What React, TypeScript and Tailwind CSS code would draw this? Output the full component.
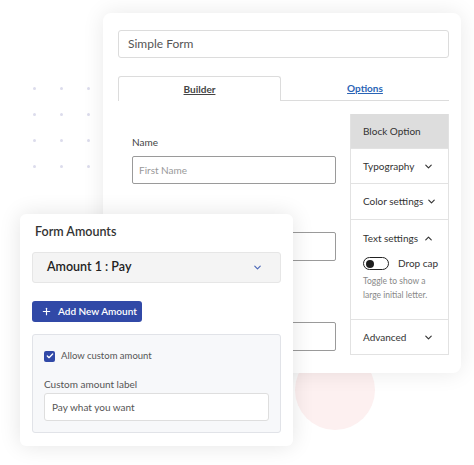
import { ChevronDown, ChevronUp, Plus, Check } from "lucide-react";

const font = { fontFamily: 'Lato, "Open Sans", sans-serif' };

function PanelRow({ label, up }: { label: string; up?: boolean }) {
  return (
    <div className="flex items-center justify-between border-t border-[#e2e2e2] h-[35px] pl-[12px] pr-[14px]">
      <span className="text-[10px] text-[#333] whitespace-nowrap">{label}</span>
      {up ? (
        <ChevronUp className="w-[11px] h-[11px] text-[#333]" strokeWidth={2.5} />
      ) : (
        <ChevronDown className="w-[11px] h-[11px] text-[#333]" strokeWidth={2.5} />
      )}
    </div>
  );
}

export default function App() {
  const dotRows = [88, 113, 139, 166];
  return (
    <div className="relative w-[474px] h-[465px] bg-white overflow-hidden" style={font}>
      {/* decorative dots */}
      <div className="absolute left-[33px] top-[87px] grid grid-cols-3 gap-x-[24px] gap-y-[23px]">
        {dotRows.flatMap((r) =>
          [0, 1, 2].map((c) => <span key={`${r}-${c}`} className="w-[3px] h-[3px] rounded-full bg-[#dcdcec]" />)
        )}
      </div>

      {/* pink blob */}
      <div className="absolute left-[295px] top-[350px] w-[80px] h-[80px] rounded-full bg-[#fdf0f0]" />

      {/* main builder card */}
      <div className="absolute left-[103px] top-[13px] w-[358px] h-[360px] bg-white rounded-[8px] shadow-[0_0_22px_rgba(0,0,0,0.09)] pt-[17px] pl-[15px] pr-[12px]">
        <div className="h-[28px] border border-[#dcdcdc] rounded-[3px] flex items-center pl-[9px] text-[12px] text-[#555]">
          Simple Form
        </div>

        <div className="flex mt-[18px] h-[25px]">
          <div className="w-[163px] border border-b-0 border-[#dcdcdc] rounded-t-[3px] flex items-center justify-center">
            <span className="text-[10px] font-bold text-[#444] underline">Builder</span>
          </div>
          <div className="flex-1 border-b border-[#dcdcdc] flex items-center justify-center">
            <span className="text-[10px] font-bold text-[#2a64b5] underline">Options</span>
          </div>
        </div>

        <div className="flex mt-[13px]">
          <div className="flex-1 pl-[14px] pr-[14px] pt-[21px]">
            <div className="text-[10px] text-[#444] leading-[14px]">Name</div>
            <div className="mt-[7px] h-[28px] border border-[#9a9a9a] rounded-[2px] flex items-center pl-[6px] text-[10px] text-[#999]">
              First Name
            </div>
            {/* fields below sit mostly behind the amounts card */}
            <div className="mt-[48px] h-[29px] border border-[#9a9a9a] rounded-[2px]" />
            <div className="mt-[61px] h-[29px] border border-[#9a9a9a] rounded-[2px]" />
          </div>

          <div className="w-[99px] border border-[#e2e2e2] border-t-0">
            <div className="h-[34px] bg-[#dddddd] flex items-center pl-[12px] text-[10px] text-[#333]">
              Block Option
            </div>
            <PanelRow label="Typography" />
            <div className="flex items-center border-t border-[#e2e2e2] h-[36px] pl-[12px] gap-[3px]">
              <span className="text-[10px] text-[#333] whitespace-nowrap">Color settings</span>
              <ChevronDown className="w-[11px] h-[11px] text-[#333]" strokeWidth={2.5} />
            </div>
            <div className="border-t border-[#e2e2e2] h-[100px] pl-[12px] pr-[14px]">
              <div className="flex items-center justify-between h-[36px]">
                <span className="text-[10px] text-[#333] whitespace-nowrap">Text settings</span>
                <ChevronUp className="w-[11px] h-[11px] text-[#333]" strokeWidth={2.5} />
              </div>
              <div className="flex items-center gap-[9px]">
                <div className="w-[26px] h-[13px] shrink-0 rounded-full border border-[#222] flex items-center pl-[2px]">
                  <span className="w-[8px] h-[8px] rounded-full bg-[#1e1e1e]" />
                </div>
                <span className="text-[10px] text-[#333] whitespace-nowrap">Drop cap</span>
              </div>
              <div className="mt-[3px] text-[8.5px] leading-[14px] text-[#888] whitespace-nowrap">
                Toggle to show a
                <br />
                large initial letter.
              </div>
            </div>
            <PanelRow label="Advanced" />
          </div>
        </div>
      </div>

      {/* form amounts card */}
      <div className="absolute left-[20px] top-[214px] w-[273px] h-[232px] bg-white rounded-[6px] shadow-[0_0_22px_rgba(0,0,0,0.11)] pt-[9px] px-[12px]">
        <div className="pl-[3px] text-[12.5px] font-semibold text-[#333] leading-[18px]">Form Amounts</div>
        <div className="mt-[11px] h-[31px] bg-[#f4f4f4] border border-[#e6e6e6] rounded-[3px] flex items-center justify-between pl-[14px] pr-[17px]">
          <span className="text-[12.5px] font-semibold text-[#222]">Amount 1 : Pay</span>
          <ChevronDown className="w-[11px] h-[11px] text-[#4a67b8]" strokeWidth={2.5} />
        </div>
        <div className="mt-[18px] w-[110px] h-[21px] bg-[#3149a7] rounded-[3px] flex items-center gap-[6px] pl-[9px]">
          <Plus className="w-[11px] h-[11px] text-white shrink-0" strokeWidth={2.5} />
          <span className="text-[10px] font-semibold text-white whitespace-nowrap">Add New Amount</span>
        </div>
        <div className="mt-[12px] h-[99px] bg-[#f7f8fa] border border-[#e1e3e8] rounded-[3px] px-[11px] pt-[14px]">
          <div className="flex items-center gap-[6px]">
            <div className="w-[11px] h-[11px] rounded-[2px] bg-[#3149a7] flex items-center justify-center">
              <Check className="w-[8px] h-[8px] text-white" strokeWidth={4} />
            </div>
            <span className="text-[9.5px] text-[#555]">Allow custom amount</span>
          </div>
          <div className="mt-[15px] text-[10px] text-[#555] leading-[12px]">Custom amount label</div>
          <div className="mt-[3px] h-[28px] bg-white border border-[#dedede] rounded-[3px] flex items-center pl-[7px] text-[10px] text-[#555]">
            Pay what you want
          </div>
        </div>
      </div>
    </div>
  );
}
